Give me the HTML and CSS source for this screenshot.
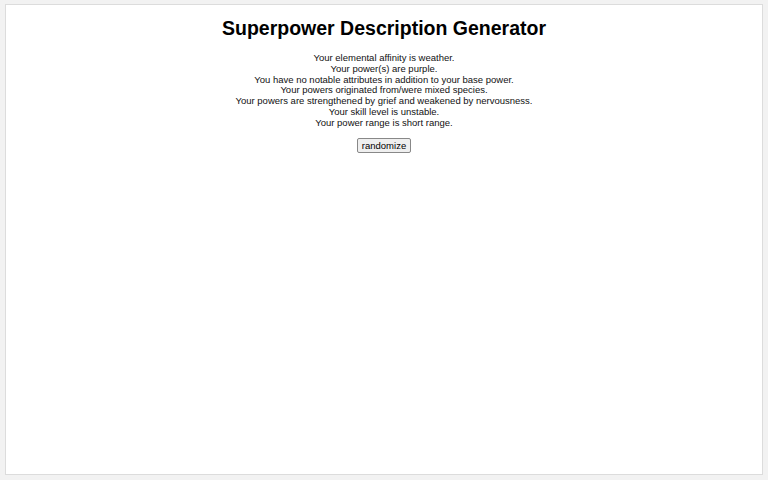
FILE: index.html
```html
<!DOCTYPE html>
<html lang="en">
<head>
    <meta charset="UTF-8">
    <meta name="viewport" content="width=device-width, initial-scale=1.0">
    <title>Superpower Description Generator</title>
    <link rel="stylesheet" href="styles.css">
</head>
<body>
    <div class="page">
        <h1>Superpower Description Generator</h1>
        <div id="description" class="description">
            <p>Your elemental affinity is weather.</p>
            <p>Your power(s) are purple.</p>
            <p>You have no notable attributes in addition to your base power.</p>
            <p>Your powers originated from/were mixed species.</p>
            <p>Your powers are strengthened by grief and weakened by nervousness.</p>
            <p>Your skill level is unstable.</p>
            <p>Your power range is short range.</p>
        </div>
        <div class="actions">
            <button type="button">randomize</button>
        </div>
    </div>
</body>
</html>
```

FILE: styles.css
```css
html, body {
    height: 100%;
}

body {
    font-family: "Liberation Sans", Arial, sans-serif;
    margin: 0;
    padding: 4px 5px 5px 5px;
    box-sizing: border-box;
    background-color: #f2f2f2;
}

.page {
    height: 100%;
    box-sizing: border-box;
    background-color: #ffffff;
    border: 1px solid #dcdcdc;
    text-align: center;
    padding-top: 12px;
}

h1 {
    font-size: 19.5px;
    line-height: 22px;
    margin: 0 0 14px 0;
    color: #000000;
}

.description p {
    margin: 0;
    font-size: 9.5px;
    line-height: 10.8px;
    color: #111111;
}

.actions {
    display: flex;
    justify-content: center;
    margin-top: 9px;
}

.actions button {
    font-family: "Liberation Sans", Arial, sans-serif;
    font-size: 9.5px;
    line-height: 11px;
    padding: 1px 4px;
    background-color: #efefef;
    border: 1px solid #888888;
    border-radius: 2px;
    color: #000000;
}
```
